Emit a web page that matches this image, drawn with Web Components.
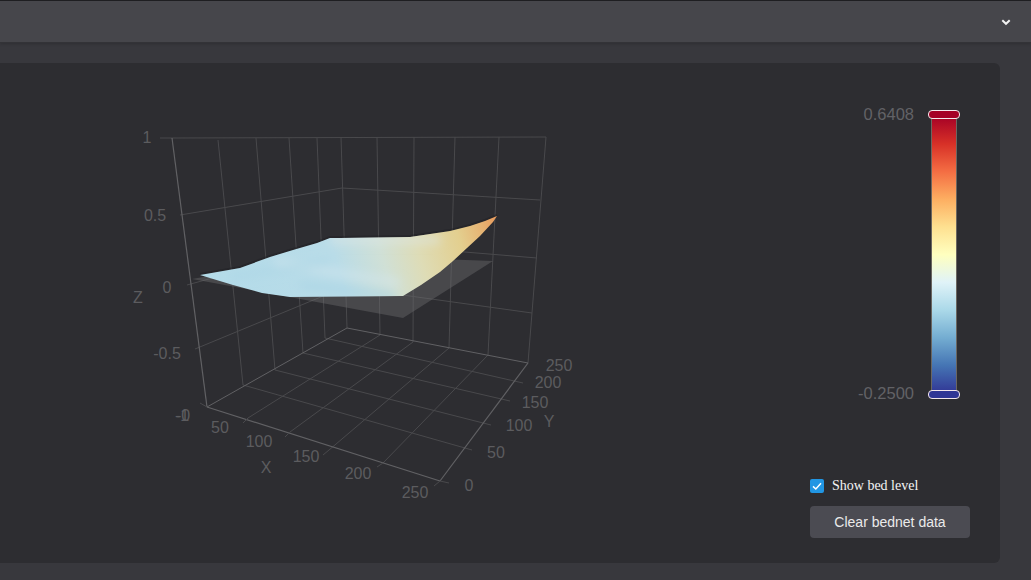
<!DOCTYPE html>
<html>
<head>
<meta charset="utf-8">
<title>Bed level</title>
<style>
  html, body { margin: 0; height: 100%; background: #38383d; overflow: hidden; }
</style>
</head>
<body>
<app-shell>
  <top-bar></top-bar>
  <bed-card>
    <bed-chart slot="chart"></bed-chart>
    <level-scale slot="side" max="0.6408" min="-0.2500"></level-scale>
    <show-check slot="side">Show bed level</show-check>
    <flat-button slot="side">Clear bednet data</flat-button>
  </bed-card>
</app-shell>

<script>
// page frame: bar on top, card under it
class AppShell extends HTMLElement {
  constructor() {
    super();
    this.attachShadow({mode: "open"}).innerHTML = `
      <style>
        :host { display: flex; flex-direction: column; width: 1031px; height: 580px; overflow: hidden; }
      </style>
      <slot></slot>`;
  }
}

class TopBar extends HTMLElement {
  constructor() {
    super();
    this.attachShadow({mode: "open"}).innerHTML = `
      <style>
        :host {
          display: flex; justify-content: flex-end; align-items: center; box-sizing: border-box;
          height: 43px; padding-right: 19px;
          background: #46464b; border-top: 1px solid #1e1e21; border-bottom: 1px solid #333337;
          box-shadow: 0 1px 3px rgba(0,0,0,.18);
        }
        svg { display: block; }
      </style>
      <svg width="12" height="10" viewBox="0 0 12 10">
        <path d="M2.3 3.2 L6 6.8 L9.7 3.2" fill="none" stroke="#f2f2f2" stroke-width="2"/>
      </svg>`;
  }
}

class BedCard extends HTMLElement {
  constructor() {
    super();
    this.attachShadow({mode: "open"}).innerHTML = `
      <style>
        :host {
          display: flex; height: 500px; width: 1020px; margin: 20px 0 0 -20px;
          background: #2d2d31; border-radius: 6px; overflow: hidden;
        }
        .chart { flex: 1; min-width: 0; }
        .side { width: 190px; flex: none; display: flex; flex-direction: column; }
      </style>
      <div class="chart"><slot name="chart"></slot></div>
      <div class="side"><slot name="side"></slot></div>`;
  }
}

// the 3d surface, coordinates are read off the reference (page pixels)
class BedChart extends HTMLElement {
  constructor() {
    super();
    const line = (a, b, c, w) =>
      `<line x1="${a[0]}" y1="${a[1]}" x2="${b[0]}" y2="${b[1]}" stroke="${c}" stroke-width="${w || 1}"/>`;
    const label = (t, x, y) => `<text x="${x}" y="${y}">${t}</text>`;
    const grid = "#49494c", axis = "#616164";
    let lines = "";

    // left wall and right wall verticals
    [[[218,140],[243,385]], [[256,138],[275,370]], [[289,138],[303,353]], [[317,138],[325,338]], [[341,137],[347,328]],
     [[377,137],[380,335]], [[414,137],[413,342]], [[455,137],[449,348]], [[499,137],[488,355]]]
      .forEach(l => lines += line(l[0], l[1], grid));
    // z levels, they bend at the back corner
    [[[180,215],[342,188],[540,200]], [[187,285],[344,242],[537,258]], [[195,349],[345,287],[532,313]]]
      .forEach(l => { lines += line(l[0], l[1], grid) + line(l[1], l[2], grid); });
    // floor grid
    [[[248,418],[380,335]], [[290,432],[413,342]], [[329,450],[449,348]], [[383,463],[488,355]],
     [[243,385],[472,450]], [[275,370],[491,425]], [[303,353],[510,401]], [[325,338],[523,383]]]
      .forEach(l => lines += line(l[0], l[1], grid));
    // box edges
    lines += line([172,138],[546,137], grid);
    lines += line([546,137],[528,363], grid);
    lines += line([160,138],[172,138], grid);
    lines += line([172,138],[207,407], axis, 1.2);
    lines += line([207,407],[440,481], axis, 1.2);
    lines += line([440,481],[528,363], axis, 1.2);
    lines += line([207,407],[347,328], axis);
    lines += line([347,328],[528,363], axis);
    lines += line([440,481],[449,483], grid);
    lines += line([200,403],[207,407], grid);
    [[248,418,243,423],[290,432,285,437],[329,450,323,455],[383,463,377,467],[440,481,434,486]]
      .forEach(t => lines += line([t[0],t[1]],[t[2],t[3]], grid));

    const top = "200,275 240,268 270,257 293,250 317,243 330,238 340,238 410,237 450,231 470,226 485,221 497,216";
    const bottom = "493,222 480,236 467,248 453,261 440,272 421,285 403,296 290,297 262,293 233,285";

    this.attachShadow({mode: "open"}).innerHTML = `
      <style>
        :host { display: block; }
        svg { display: block; }
        text { font: 16px "Liberation Sans", Arial, sans-serif; fill: #5c5c5f; text-anchor: middle; dominant-baseline: central; }
      </style>
      <svg width="830" height="500" viewBox="-20 63 830 500">
        <defs>
          <linearGradient id="skin" gradientUnits="userSpaceOnUse" x1="205" y1="300" x2="497" y2="216">
            <stop offset="0" stop-color="#b3dbe9"/>
            <stop offset=".45" stop-color="#b9dce8"/>
            <stop offset=".6" stop-color="#d0e0d6"/>
            <stop offset=".72" stop-color="#dedcb6"/>
            <stop offset=".86" stop-color="#e3cf8f"/>
            <stop offset=".95" stop-color="#e6b070"/>
            <stop offset="1" stop-color="#e8985a"/>
          </linearGradient>
          <clipPath id="edge"><polygon points="${top} ${bottom}"/></clipPath>
          <filter id="soft" x="-20%" y="-50%" width="140%" height="200%"><feGaussianBlur stdDeviation="5"/></filter>
        </defs>
        ${lines}
        <polygon points="192,279 330,255 493,261 403,318" fill="#6e6e70" fill-opacity=".42"/>
        <polyline points="${top}" fill="none" stroke="#1f1f23" stroke-width="2" stroke-opacity=".45" transform="translate(0,-1)"/>
        <polygon points="${top} ${bottom}" fill="url(#skin)"/>
        <g clip-path="url(#edge)" filter="url(#soft)" fill="none" stroke-width="7">
          <path d="M275 262 L400 283" stroke="#d6e8ee" stroke-opacity=".55"/>
          <path d="M300 285 L395 296" stroke="#a6d3e5" stroke-opacity=".6"/>
          <path d="M330 240 L440 240" stroke="#dde8ea" stroke-opacity=".6"/>
          <path d="M230 277 L330 262" stroke="#a9d5e6" stroke-opacity=".5"/>
        </g>
        ${label("1",147,137)}${label("0.5",155,215)}${label("0",167,287)}${label("Z",138,297)}
        ${label("-0.5",167,353)}${label("-1",182,415)}${label("-0",183,415)}
        ${label("50",220,427)}${label("100",259,441)}${label("150",306,456)}${label("200",358,473)}${label("250",415,492)}${label("X",266,467)}
        ${label("0",469,485)}${label("50",496,452)}${label("100",519,425)}${label("150",535,402)}${label("200",548,382)}${label("250",559,365)}${label("Y",549,421)}
      </svg>`;
  }
}

// colour scale with two drag handles
class LevelScale extends HTMLElement {
  constructor() {
    super();
    this.attachShadow({mode: "open"}).innerHTML = `
      <style>
        :host {
          display: flex; gap: 17px; height: 289px; margin-top: 47px;
          font: 16.5px "Liberation Sans", Arial, sans-serif; color: #626266;
        }
        .labels { width: 104px; display: flex; flex-direction: column; justify-content: space-between; align-items: flex-end; line-height: 18px; margin: -5px 0 -3px; }
        .rail { position: relative; width: 26px; margin: 5px 0; box-sizing: border-box; border: 1px solid #6b6660;
          background: linear-gradient(to bottom, #a50026, #d73027 10%, #f46d43 20%, #fdae61 30%, #fee090 40%, #ffffbf 50%, #e0f3f8 60%, #abd9e9 70%, #74add1 80%, #4575b4 90%, #313695); }
        .grip { position: absolute; left: -4px; width: 32px; height: 9px; box-sizing: border-box; border: 1px solid #f3e6ea; border-radius: 4px; }
        .hi { top: -6px; background: #a50026; }
        .lo { bottom: -6px; background: #313695; }
      </style>
      <div class="labels"><span id="max"></span><span id="min"></span></div>
      <div class="rail"><div class="grip hi"></div><div class="grip lo"></div></div>`;
  }
  connectedCallback() {
    this.shadowRoot.getElementById("max").textContent = this.getAttribute("max");
    this.shadowRoot.getElementById("min").textContent = this.getAttribute("min");
  }
}

class ShowCheck extends HTMLElement {
  constructor() {
    super();
    this.attachShadow({mode: "open"}).innerHTML = `
      <style>
        :host {
          display: flex; align-items: center; gap: 8px; height: 14px; margin-top: 80px;
          font: 14px "Liberation Serif", "Times New Roman", serif; color: #f4f4f4;
        }
        .box { width: 14px; height: 14px; background: #2196e3; border-radius: 2px; flex: none; }
        svg { display: block; }
      </style>
      <div class="box">
        <svg width="14" height="14" viewBox="0 0 14 14"><path d="M3 7.4 L5.8 10 L11 4.2" fill="none" stroke="#fff" stroke-width="1.5"/></svg>
      </div>
      <span><slot></slot></span>`;
  }
}

class FlatButton extends HTMLElement {
  constructor() {
    super();
    this.attachShadow({mode: "open"}).innerHTML = `
      <style>
        :host {
          display: flex; align-items: center; justify-content: center;
          width: 160px; height: 32px; margin-top: 13px; border-radius: 4px;
          background: #4b4b52; color: #eaeaea; font: 14px "Liberation Sans", Arial, sans-serif;
        }
      </style>
      <slot></slot>`;
  }
}

customElements.define("app-shell", AppShell);
customElements.define("top-bar", TopBar);
customElements.define("bed-card", BedCard);
customElements.define("bed-chart", BedChart);
customElements.define("level-scale", LevelScale);
customElements.define("show-check", ShowCheck);
customElements.define("flat-button", FlatButton);
</script>
</body>
</html>
